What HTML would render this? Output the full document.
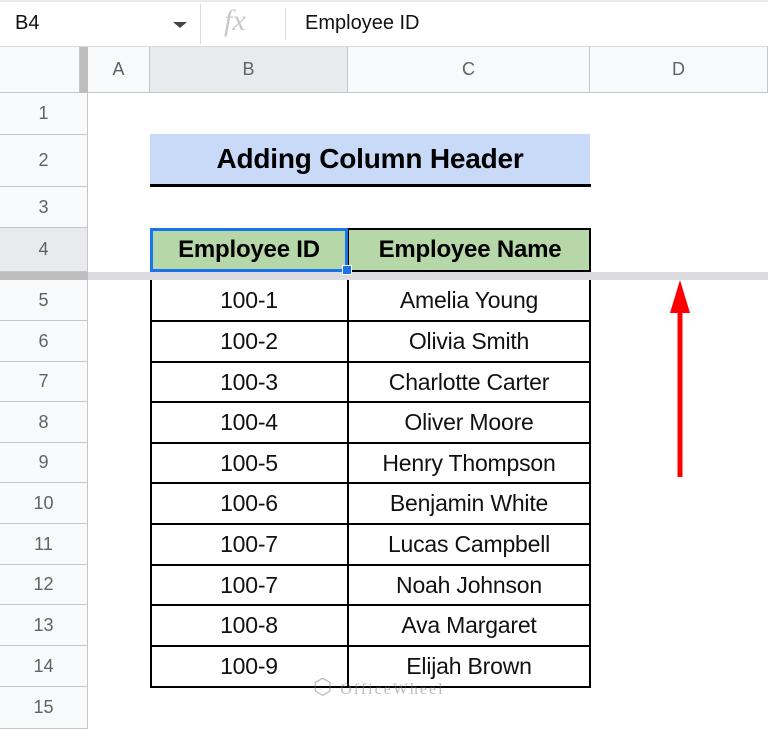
<!DOCTYPE html>
<html><head><style>
*{margin:0;padding:0;box-sizing:border-box}
body{width:768px;height:729px;position:relative;background:#fff;font-family:"Liberation Sans",Arial,sans-serif;overflow:hidden}
.a{position:absolute}
.rh{position:absolute;left:0;width:88px;background:#f8f9fa;border-bottom:1px solid #c4c7c5;border-right:1px solid #c4c7c5;color:#5f6368;font-size:18px;display:flex;align-items:center;justify-content:center}
.ch{position:absolute;top:47px;height:46px;background:#f8f9fa;border-right:1px solid #c4c7c5;border-bottom:1px solid #c4c7c5;color:#5f6368;font-size:18px;display:flex;align-items:center;justify-content:center}
.c{position:absolute;display:flex;align-items:center;justify-content:center;font-size:23px;color:#111;letter-spacing:-0.2px}
</style></head><body>
<div class="a" style="left:0;top:0;width:768px;height:2px;background:#e8eaed"></div>
<div class="a" style="left:15px;top:12px;font-size:20px;color:#111">B4</div>
<div class="a" style="left:173px;top:22px;width:0;height:0;border-left:7px solid transparent;border-right:7px solid transparent;border-top:6px solid #444"></div>
<div class="a" style="left:200px;top:4px;width:1px;height:40px;background:#dadce0"></div>
<div class="a" style="left:224px;top:4px;font-family:'Liberation Serif',serif;font-style:italic;font-size:30px;color:#c8c8c8">fx</div>
<div class="a" style="left:285px;top:8px;width:1px;height:32px;background:#dadce0"></div>
<div class="a" style="left:305px;top:12px;font-size:20px;color:#111">Employee ID</div>
<div class="a" style="left:0;top:46px;width:768px;height:1px;background:#dadce0"></div>
<div class="ch" style="left:0;width:80px"></div>
<div class="a" style="left:80px;top:47px;width:8px;height:46px;background:#bdbdbd"></div>
<div class="ch" style="left:88px;width:62px">A</div>
<div class="ch" style="left:150px;width:198px;background:#e8eaed">B</div>
<div class="ch" style="left:348px;width:242px">C</div>
<div class="ch" style="left:590px;width:178px">D</div>
<div class="rh" style="top:93px;height:42px">1</div>
<div class="rh" style="top:135px;height:52px">2</div>
<div class="rh" style="top:187px;height:41px">3</div>
<div class="rh" style="top:228px;height:44px;background:#e8eaed">4</div>
<div class="a" style="left:0;top:272px;width:88px;height:8px;background:#bdbdbd"></div>
<div class="a" style="left:88px;top:272px;width:680px;height:8px;background:#dadce0"></div>
<div class="rh" style="top:280px;height:41px">5</div>
<div class="rh" style="top:321px;height:41px">6</div>
<div class="rh" style="top:362px;height:40px">7</div>
<div class="rh" style="top:402px;height:41px">8</div>
<div class="rh" style="top:443px;height:40px">9</div>
<div class="rh" style="top:483px;height:41px">10</div>
<div class="rh" style="top:524px;height:41px">11</div>
<div class="rh" style="top:565px;height:40px">12</div>
<div class="rh" style="top:605px;height:41px">13</div>
<div class="rh" style="top:646px;height:41px">14</div>
<div class="rh" style="top:687px;height:42px">15</div>
<div class="c" style="left:150px;top:134px;width:440px;height:50px;background:#c9daf8;font-weight:bold;font-size:28px;color:#000">Adding Column Header</div>
<div class="a" style="left:150px;top:184px;width:441px;height:3px;background:#000"></div>
<div class="c" style="left:150px;top:228px;width:441px;height:44px;background:#b6d7a8;border:2px solid #000;"></div>
<div class="c" style="left:150px;top:228px;width:198px;height:44px;font-weight:bold;font-size:24px;color:#000;border:3px solid #1a73e8">Employee ID</div>
<div class="c" style="left:348px;top:228px;width:243px;height:44px;font-weight:bold;font-size:24px;color:#000;border-left:1px solid #000">Employee Name</div>
<div class="a" style="left:342px;top:265px;width:10px;height:10px;background:#1a73e8;border:1px solid #fff"></div>
<div class="a" style="left:150px;top:280px;width:441px;height:408px;border:2px solid #000;border-top:none"></div>
<div class="a" style="left:347px;top:280px;width:2px;height:407px;background:#000"></div>
<div class="c" style="left:150px;top:280px;width:198px;height:41px">100-1</div><div class="c" style="left:348px;top:280px;width:242px;height:41px">Amelia Young</div>
<div class="a" style="left:150px;top:320px;width:441px;height:2px;background:#000"></div>
<div class="c" style="left:150px;top:321px;width:198px;height:41px">100-2</div><div class="c" style="left:348px;top:321px;width:242px;height:41px">Olivia Smith</div>
<div class="a" style="left:150px;top:361px;width:441px;height:2px;background:#000"></div>
<div class="c" style="left:150px;top:362px;width:198px;height:40px">100-3</div><div class="c" style="left:348px;top:362px;width:242px;height:40px">Charlotte Carter</div>
<div class="a" style="left:150px;top:401px;width:441px;height:2px;background:#000"></div>
<div class="c" style="left:150px;top:402px;width:198px;height:41px">100-4</div><div class="c" style="left:348px;top:402px;width:242px;height:41px">Oliver Moore</div>
<div class="a" style="left:150px;top:442px;width:441px;height:2px;background:#000"></div>
<div class="c" style="left:150px;top:443px;width:198px;height:40px">100-5</div><div class="c" style="left:348px;top:443px;width:242px;height:40px">Henry Thompson</div>
<div class="a" style="left:150px;top:482px;width:441px;height:2px;background:#000"></div>
<div class="c" style="left:150px;top:483px;width:198px;height:41px">100-6</div><div class="c" style="left:348px;top:483px;width:242px;height:41px">Benjamin White</div>
<div class="a" style="left:150px;top:523px;width:441px;height:2px;background:#000"></div>
<div class="c" style="left:150px;top:524px;width:198px;height:41px">100-7</div><div class="c" style="left:348px;top:524px;width:242px;height:41px">Lucas Campbell</div>
<div class="a" style="left:150px;top:564px;width:441px;height:2px;background:#000"></div>
<div class="c" style="left:150px;top:565px;width:198px;height:40px">100-7</div><div class="c" style="left:348px;top:565px;width:242px;height:40px">Noah Johnson</div>
<div class="a" style="left:150px;top:604px;width:441px;height:2px;background:#000"></div>
<div class="c" style="left:150px;top:605px;width:198px;height:41px">100-8</div><div class="c" style="left:348px;top:605px;width:242px;height:41px">Ava Margaret</div>
<div class="a" style="left:150px;top:645px;width:441px;height:2px;background:#000"></div>
<div class="c" style="left:150px;top:646px;width:198px;height:41px">100-9</div><div class="c" style="left:348px;top:646px;width:242px;height:41px">Elijah Brown</div>
<div class="a" style="left:313px;top:674px;font-family:'Liberation Serif',serif;font-size:16px;letter-spacing:2px;color:rgba(120,120,120,0.5)"><span style="font-size:22px">⬡</span> OfficeWheel</div>
<svg class="a" style="left:660px;top:275px" width="40" height="210"><polygon points="20,5 10,38 30,38" fill="#f00"/><rect x="17.5" y="34" width="5" height="168" fill="#f00"/></svg>
</body></html>
